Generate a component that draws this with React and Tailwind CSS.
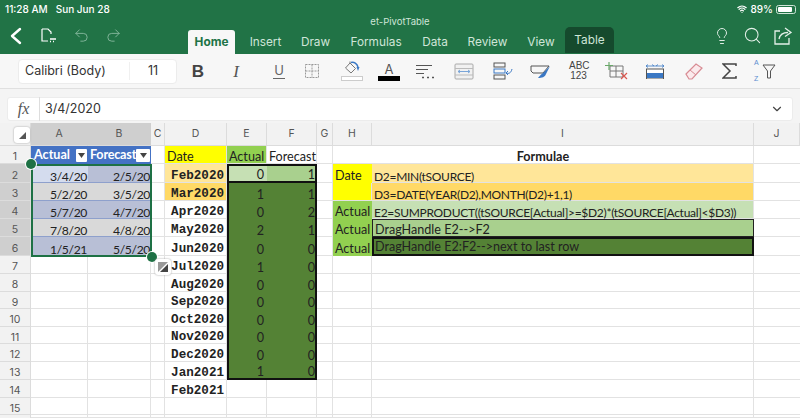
import { ChevronDown, Undo2, Redo2, Lightbulb, Search, Wifi } from "lucide-react";

const colWidths = "31px 57px 63px 14px 62px 40px 50px 16px 39px 382px 46px";
const rowHeights = "23px 18px 19px 18px 18px 18px 19px 18px 18px 17px 18px 17px 18px 18px 18px 17px 3px";

const headers = ["", "A", "B", "C", "D", "E", "F", "G", "H", "I", "J"];
const months = ["Feb2020", "Mar2020", "Apr2020", "May2020", "Jun2020", "Jul2020", "Aug2020", "Sep2020", "Oct2020", "Nov2020", "Dec2020", "Jan2021", "Feb2021"];
const counts = [[0, 1], [1, 1], [0, 2], [2, 1], [0, 0], [1, 0], [0, 0], [0, 0], [0, 0], [0, 0], [0, 0], [1, 0]];
const source = [["3/4/20", "2/5/20"], ["5/2/20", "3/5/20"], ["5/7/20", "4/7/20"], ["7/8/20", "4/8/20"], ["1/5/21", "5/5/20"]];

function Cell({ className = "", shift = "top-[1px]", children }) {
  return (
    <div className={`border-r border-b border-[#e2e2e2] flex items-end whitespace-nowrap text-[12.6px] leading-none text-[#222] font-['Lato',sans-serif] ${className}`}>
      {children !== undefined && children !== null && <span className={`relative ${shift}`}>{children}</span>}
    </div>
  );
}

function TableHead({ label, className = "", btn }) {
  return (
    <div className={`bg-[#4472c4] flex items-center justify-between whitespace-nowrap text-[12.6px] leading-none text-white font-bold font-['Lato',sans-serif] ${className}`}>
      {label}
      <FilterBtn className={btn} />
    </div>
  );
}

function RowHead({ n, on }) {
  return (
    <div className={`border-r border-b border-[#dcdcdc] flex items-center justify-center pt-[6px] text-[10.5px] leading-none text-[#555] font-['Inter',sans-serif] ${on ? "bg-[#cfcfcf]" : "bg-[#f2f2f2]"}`}>
      {n}
    </div>
  );
}

function Sheet() {
  const rows = [];
  const caps = "!text-[12px] tracking-[-0.3px]";
  for (let r = 1; r <= 16; r++) {
    const i = r - 2;
    const src = i >= 0 && i < 5 ? source[i] : null;
    const srcBg = i % 2 === 0 ? "bg-[#b8bfd6]" : "bg-[#d9d9d9]";
    const month = i >= 0 ? months[i] : null;
    const count = i >= 0 && i < 12 ? counts[i] : null;
    let monthBg = "";
    if (i === 0) monthBg = "bg-[#ffe699]";
    if (i === 1) monthBg = "bg-[#ffd966]";

    rows.push(<RowHead key={`h${r}`} n={r < 16 ? r : ""} on={r >= 2 && r <= 6} />);

    if (r === 1) {
      rows.push(
        <TableHead key="a1" label="Actual" className="pl-[3px]" btn="w-[11px]" />,
        <TableHead key="b1" label="Forecast" className="pl-[2px] tracking-[-0.2px]" btn="w-[14px]" />
      );
    } else {
      rows.push(
        <Cell key={`a${r}`} className={`justify-end pr-[1px] !text-[12.2px] tracking-[-0.4px] ${src ? `${i === 0 ? "bg-[#d4dcee]" : srcBg} !border-r-0 !border-b-[#8ea0cc]` : ""}`}>{src && src[0]}</Cell>,
        <Cell key={`b${r}`} className={`justify-end pr-[1px] !text-[12.2px] tracking-[-0.4px] ${src ? `${srcBg} !border-r-0 !border-b-[#8ea0cc]` : ""}`}>{src && src[1]}</Cell>
      );
    }

    rows.push(<Cell key={`c${r}`} />);

    if (r === 1) {
      rows.push(
        <Cell key="d1" className="bg-[#ffff00] pl-[2px]">Date</Cell>,
        <Cell key="e1" className="bg-[#92d050] pl-[2px]">Actual</Cell>,
        <Cell key="f1" className="pl-[2px]">Forecast</Cell>
      );
    } else {
      rows.push(
        <Cell key={`d${r}`} shift="top-[1px]" className={`justify-end pr-[2px] font-bold !text-[12.6px] !font-['Liberation_Mono',monospace] ${monthBg}`}>{month}</Cell>
      );
      let eBg = "", fBg = "";
      if (i === 0) {
        eBg = "bg-[#c6e0b4] border-t-2 border-l-2 !border-[#111] !border-r-0 !border-b-2";
        fBg = "bg-[#a9d08e] border-t-2 !border-[#111] !border-r-2 !border-b-2";
      } else if (count) {
        eBg = `bg-[#548235] border-l-2 !border-l-[#111] !border-r-0 ${i === 11 ? "!border-b-2 !border-b-[#111]" : "!border-b-0"}`;
        fBg = `bg-[#548235] !border-r-2 !border-r-[#111] ${i === 11 ? "!border-b-2 !border-b-[#111]" : "!border-b-0"}`;
      }
      rows.push(
        <Cell key={`e${r}`} className={`justify-end pr-[3px] ${eBg}`}>{count && count[0]}</Cell>,
        <Cell key={`f${r}`} className={`justify-end ${fBg}`}>{count && count[1]}</Cell>
      );
    }

    rows.push(<Cell key={`g${r}`} />);

    if (r === 1) {
      rows.push(<Cell key="h1" className="!border-r-0" />, <Cell key="i1" className="justify-center font-bold pr-[39px]">Formulae</Cell>);
    } else if (r === 2) {
      rows.push(<Cell key="h2" className="bg-[#ffff00] !border-[#ffff00] pl-[2px]">Date</Cell>, <Cell key="i2" className={`bg-[#ffe699] pl-[2px] ${caps}`}>D2=MIN(tSOURCE)</Cell>);
    } else if (r === 3) {
      rows.push(<Cell key="h3" className="bg-[#ffff00]" />, <Cell key="i3" className={`bg-[#ffd966] pl-[2px] ${caps}`}>D3=DATE(YEAR(D2),MONTH(D2)+1,1)</Cell>);
    } else if (r === 4) {
      rows.push(<Cell key="h4" className="bg-[#92d050] !border-[#92d050] pl-[2px]">Actual</Cell>, <Cell key="i4" className={`bg-[#c6e0b4] pl-[2px] ${caps}`}>E2=SUMPRODUCT((tSOURCE[Actual]&gt;=$D2)*(tSOURCE[Actual]&lt;$D3))</Cell>);
    } else if (r === 5) {
      rows.push(<Cell key="h5" className="bg-[#92d050] !border-[#92d050] pl-[2px]">Actual</Cell>, <Cell key="i5" className="bg-[#a9d08e] border-t border-l !border-[#222] pl-[2px]">DragHandle E2--&gt;F2</Cell>);
    } else if (r === 6) {
      rows.push(<Cell key="h6" className="bg-[#92d050] !border-[#92d050] pl-[2px]">Actual</Cell>, <Cell key="i6" shift="top-0" className="bg-[#548235] border-t-2 border-l-2 !border-r-2 !border-b-2 !border-[#111] pl-[1px]">DragHandle E2:F2--&gt;next to last row</Cell>);
    } else {
      rows.push(<Cell key={`h${r}`} />, <Cell key={`i${r}`} />);
    }

    rows.push(<Cell key={`j${r}`} className="!border-r-0" />);
  }

  return (
    <div className="relative h-[295px] bg-white overflow-hidden">
      <div className="grid" style={{ gridTemplateColumns: colWidths, gridTemplateRows: rowHeights }}>
        {headers.map((h, i) => (
          <div
            key={i}
            className={`flex items-center justify-center border-r border-b border-[#dcdcdc] text-[10.5px] text-[#555] font-['Inter',sans-serif] ${i === 1 || i === 2 ? "bg-[#cfcfcf] !border-r-[#cfcfcf]" : "bg-[#f2f2f2]"}`}
          >
            {h}
          </div>
        ))}
        {rows}
      </div>

      {/* select-all corner */}
      <div className="absolute left-[14px] top-[4px] w-[16px] h-[16px] bg-white rounded-[3px] shadow-[0_0_2px_#999] flex items-center justify-center">
        <svg width="9" height="9" viewBox="0 0 9 9"><path d="M8 1V8H1Z" fill="#555" /></svg>
      </div>

      {/* table selection */}
      <div className="absolute left-[31px] top-[41px] w-[121px] h-[93px] border-2 border-[#1e7145] pointer-events-none" />
      <Handle className="left-[26px] top-[36px]" />
      <Handle className="left-[147px] top-[129px]" />

      {/* quick analysis */}
      <div className="absolute left-[155px] top-[136px] w-[16px] h-[16px] bg-white rounded-[3px] shadow-[0_0_2px_#999] flex items-center justify-center">
        <svg width="10" height="10" viewBox="0 0 10 10">
          <path d="M0 0H10L0 10Z" fill="#999" />
          <path d="M10 2V10H2Z" fill="#444" />
        </svg>
      </div>
    </div>
  );
}

function Handle({ className }) {
  return <div className={`absolute w-[10px] h-[10px] rounded-full bg-[#1e7145] ring-1 ring-white ${className}`} />;
}

function FilterBtn({ className }) {
  return (
    <span className={`shrink-0 h-[13px] mr-[1px] bg-white rounded-[1px] flex items-center justify-center ${className}`}>
      <svg width="7" height="5" viewBox="0 0 7 5"><path d="M0 0H7L3.5 5Z" fill="#444" /></svg>
    </span>
  );
}

function Tab({ label, className = "" }) {
  return <div className={`h-[24px] pt-[2px] flex items-center justify-center text-[11.8px] text-[#cfe5d8] ${className}`}>{label}</div>;
}

function RibbonIcons() {
  return (
    <>
      <span className="ml-[14px] w-[14px] text-center text-[17px] font-bold text-[#444] font-['Liberation_Sans',sans-serif] leading-none">B</span>
      <span className="ml-[23px] w-[16px] text-center text-[17px] italic text-[#555] font-['Liberation_Serif',serif] leading-none">I</span>
      <span className="ml-[27px] w-[16px] flex justify-center">
        <span className="px-[1px] pb-[1px] text-[13px] border-b border-[#666] text-[#666] leading-none font-['Inter',sans-serif]">U</span>
      </span>
      <svg className="ml-[17px]" width="16" height="16" viewBox="0 0 16 16" fill="none" stroke="#999" strokeWidth="1" strokeDasharray="2 1">
        <path d="M1.5 1.5H14.5V14.5H1.5ZM8 1.5V14.5M1.5 8H14.5" />
      </svg>
      <div className="ml-[20px] w-[23px] flex flex-col items-center gap-[1px]">
        <svg width="18" height="14" viewBox="0 0 18 14" fill="none">
          <path d="M7 2L12.5 7.5L8 12L2.5 7Z" stroke="#777" strokeWidth="1" />
          <path d="M7 2V0.5" stroke="#777" />
          <path d="M8 1.5C11 0.5 14 2.5 15 6" stroke="#3b78c4" strokeWidth="1.5" />
          <path d="M13.5 6L15 10L16.5 6Z" fill="#3b78c4" />
        </svg>
        <div className="w-[22px] h-[5px] bg-white border border-[#ccc]" />
      </div>
      <div className="ml-[15px] w-[22px] flex flex-col items-center">
        <span className="text-[13px] text-[#555] leading-[14px] font-['Inter',sans-serif]">A</span>
        <div className="w-[22px] h-[5px] bg-black" />
      </div>
      <svg className="ml-[15px]" width="20" height="16" viewBox="0 0 20 16" stroke="#555" strokeWidth="1" fill="none">
        <path d="M1 2.5H17M1 6.5H13M1 10.5H9" />
        <path d="M7 14.5H9M12 14.5H14M17 14.5H19" strokeWidth="1.5" />
      </svg>
      <svg className="ml-[19px]" width="20" height="17" viewBox="0 0 20 17" fill="none">
        <rect x="1" y="1" width="18" height="15" rx="1" stroke="#aaa" fill="#f1f1f1" />
        <path d="M1 5.5H19M1 12H19" stroke="#bbb" />
        <path d="M4 8.5H16M4 8.5L6 7M4 8.5L6 10M16 8.5L14 7M16 8.5L14 10" stroke="#7aa5d8" />
      </svg>
      <svg className="ml-[19px]" width="20" height="18" viewBox="0 0 20 18" fill="none">
        <rect x="1" y="1" width="11" height="4" stroke="#555" />
        <rect x="1" y="7" width="11" height="4" stroke="#3b78c4" />
        <rect x="1" y="13" width="11" height="4" stroke="#555" />
        <path d="M19 7C18 11 16 12 13 11M13 11L15 9M13 11L15 13" stroke="#3b78c4" />
      </svg>
      <svg className="ml-[17px]" width="21" height="15" viewBox="0 0 21 15" fill="none">
        <path d="M1 2H19L13 9H3L1 7Z" stroke="#555" />
        <path d="M20 2L13 9C10 11 9 13 8 14C12 14 15 13 16 10Z" fill="#3b78c4" />
      </svg>
      <span className="ml-[18px] w-[19px] text-center text-[10px] leading-[10.5px] text-[#444] font-['Liberation_Sans',sans-serif]">ABC<br />123</span>
      <svg className="ml-[17px]" width="23" height="18" viewBox="0 0 23 18" fill="none">
        <path d="M5 4H18V15H5ZM5 9H18M11 4V15" stroke="#777" />
        <path d="M0 3.5H8M4 0V8" stroke="#69a869" strokeWidth="1.2" />
        <path d="M16 11L22 17M22 11L16 17" stroke="#d9574f" strokeWidth="1.2" />
      </svg>
      <svg className="ml-[18px]" width="18" height="15" viewBox="0 0 18 15" fill="none">
        <path d="M0 2H18M0 2L2 0.5M0 2L2 3.5M8 2L6 0.5M10 2L12 0.5M18 2L16 0.5M18 2L16 3.5" stroke="#3b78c4" strokeWidth="0.8" />
        <rect x="0.5" y="5" width="17" height="10" fill="#fff" stroke="#555" />
        <rect x="1" y="9" width="16" height="5" fill="#3b78c4" />
      </svg>
      <svg className="ml-[21px]" width="18" height="17" viewBox="0 0 18 17" fill="none">
        <path d="M1 11L11 1L17 5L7 16H4Z" stroke="#d88c94" fill="#fbeaec" strokeWidth="1.2" />
        <path d="M5 7L11 12" stroke="#d88c94" />
      </svg>
      <svg className="ml-[19px]" width="15" height="16" viewBox="0 0 15 16" fill="none" stroke="#444" strokeWidth="1.5">
        <path d="M14 3V1H1L8 8L1 15H14V13" />
      </svg>
      <div className="ml-[17px] flex items-center">
        <span className="w-[6px] text-[7px] leading-[8px] text-[#5b8ed0] font-['Liberation_Sans',sans-serif]">A<br /><br />Z</span>
        <svg className="ml-[2px]" width="14" height="15" viewBox="0 0 14 15" fill="none" stroke="#555">
          <path d="M1 1H13L8.5 7V14H5.5V7Z" />
        </svg>
      </div>
    </>
  );
}

export default function App() {
  return (
    <div className="w-[800px] h-[418px] overflow-hidden bg-white font-['Liberation_Sans',Arial,sans-serif]">
      <header className="h-[54px] bg-[#217346] relative flex flex-col font-['Inter',sans-serif]">
        <div className="h-[17px] px-[5px] pt-[1px] flex items-center justify-between text-[10px] font-medium text-white">
          <span>11:28 AM&nbsp;&nbsp; Sun Jun 28</span>
          <div className="flex items-center gap-[3px]">
            <Wifi size={10} strokeWidth={3} />
            <span>89%</span>
            <div className="w-[20px] h-[9px] rounded-[2.5px] border border-[#cfe5d8] p-[1px] mr-[-1px]">
              <div className="h-full w-[85%] bg-white rounded-[1px]" />
            </div>
          </div>
        </div>
        <div className="absolute left-0 right-0 top-[15px] text-center text-[9.5px] text-[#cfe5d8]">et-PivotTable</div>
        <div className="flex-1 flex items-end">
          <div className="flex items-center w-[188px] h-[37px] pl-[10px]">
            <svg width="13" height="18" viewBox="0 0 13 18" fill="none" stroke="#fff" strokeWidth="2.4" strokeLinecap="round" strokeLinejoin="round">
              <path d="M10 2L2 9L10 16" />
            </svg>
            <svg className="ml-[18px]" width="16" height="15" viewBox="0 0 16 15" fill="none" stroke="#fff" strokeWidth="1.2">
              <path d="M1 1H7L10 4V6M1 1V13H7" />
              <path d="M9 11H15M9 13.5H10M12 13.5H13" strokeWidth="1.4" />
            </svg>
            <Undo2 className="ml-[16px] text-[#7fb398]" size={17} strokeWidth={1.4} />
            <Redo2 className="ml-[15px] text-[#7fb398]" size={17} strokeWidth={1.4} />
          </div>
          <div className="flex items-end">
            <Tab label="Home" className="w-[47px] mr-[5px] bg-[#f7f7f7] !text-[#217346] font-bold rounded-t-[3px]" />
            <Tab label="Insert" className="w-[51px]" />
            <Tab label="Draw" className="w-[49px]" />
            <Tab label="Formulas" className="w-[72px]" />
            <Tab label="Data" className="w-[46px]" />
            <Tab label="Review" className="w-[59px]" />
            <Tab label="View" className="w-[48px]" />
            <Tab label="Table" className="w-[49px] !h-[26px] mb-[1px] bg-[#154a2d] rounded-t-[5px]" />
          </div>
          <div className="flex-1 flex items-center justify-end gap-[12px] pr-[7px] h-[37px] text-[#e4f0e9]">
            <Lightbulb size={18} strokeWidth={1.3} />
            <Search size={19} strokeWidth={1.3} />
            <svg width="19" height="18" viewBox="0 0 19 18" fill="none" stroke="currentColor" strokeWidth="1.3">
              <path d="M6 4H1V17H15V11" />
              <path d="M5 12C6 7 9 5.5 14 5.5M11 1L17 5.5L11 9.5" />
            </svg>
          </div>
        </div>
      </header>

      <div className="h-[35px] bg-[#f7f7f7] border-b border-[#e0e0e0] flex items-center pl-[18px]">
        <div className="w-[159px] h-[25px] bg-white rounded-[4px] border border-[#ececec] flex items-center text-[12.5px] text-[#333] font-['Inter',sans-serif]">
          <span className="w-[111px] pl-[6px] border-r border-[#f0f0f0] whitespace-nowrap">Calibri (Body)</span>
          <span className="flex-1 text-center">11</span>
        </div>
        <div className="flex items-center">
          <RibbonIcons />
        </div>
      </div>

      <div className="h-[34px] bg-[#f4f4f4] pt-[8px] px-[7px]">
        <div className="h-[24px] bg-white rounded-[3px] border border-[#ececec] flex items-center">
          <span className="w-[32px] text-center text-[16px] italic text-[#555] font-['Liberation_Serif',serif] border-r border-[#ddd]">fx</span>
          <span className="pl-[5px] pt-[1px] text-[12.5px] text-[#333] font-['Inter',sans-serif]">3/4/2020</span>
          <ChevronDown className="ml-auto mr-[8px] text-[#444]" size={14} strokeWidth={2} />
        </div>
      </div>

      <Sheet />
    </div>
  );
}
